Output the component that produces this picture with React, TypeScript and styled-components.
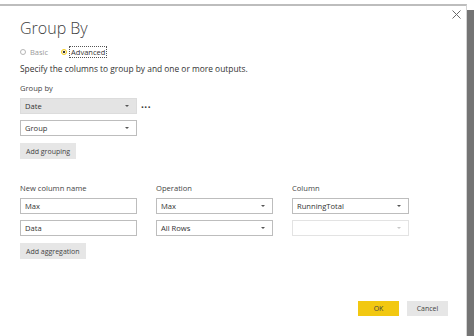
import styled, { createGlobalStyle } from "styled-components";

const GlobalStyle = createGlobalStyle`
  html, body {
    margin: 0;
    padding: 0;
    background: #ffffff;
  }
  body {
    font-family: "Open Sans", "Noto Sans", "Liberation Sans", sans-serif;
    color: #333333;
    overflow: hidden;
  }
`;

const Screen = styled.div`
  display: flex;
  align-items: flex-start;
  width: 474px;
  height: 336px;
  padding-top: 4px;
  box-sizing: border-box;
`;

const Dialog = styled.div`
  flex: none;
  width: 467px;
  height: 332px;
  box-sizing: border-box;
  border-top: 2px solid #bdbdbd;
  border-right: 1px solid #d4d4d4;
  background: #ffffff;
  padding: 0 0 0 20px;
  display: flex;
  flex-direction: column;
`;

const Shadow = styled.div`
  flex: none;
  width: 7px;
  height: 326px;
  margin-top: 6px;
  background: #747474;
`;

const Header = styled.div`
  display: flex;
  justify-content: space-between;
  align-items: flex-start;
  padding-right: 4px;
`;

const Close = styled.div`
  width: 11px;
  height: 11px;
  margin-top: 3px;
  display: flex;
  align-items: center;
  justify-content: center;
`;

const Title = styled.h1`
  margin: 12px 0 0;
  font-size: 16px;
  font-weight: 300;
  color: #404040;
  line-height: 20px;
`;

const RadioRow = styled.div`
  display: flex;
  align-items: center;
  gap: 12px;
  margin-top: 8px;
  font-size: 7.5px;
  height: 12px;
`;

const RadioOption = styled.label<{ $checked?: boolean }>`
  display: flex;
  align-items: center;
  gap: 3px;
  color: ${(p) => (p.$checked ? "#333" : "#9a9a9a")};

  span {
    padding: 0 1px;
    outline: ${(p) => (p.$checked ? "1px dotted #555" : "none")};
    line-height: 10px;
  }
`;

const RadioDot = styled.i<{ $checked?: boolean }>`
  width: 6px;
  height: 6px;
  border-radius: 50%;
  box-sizing: border-box;
  border: 1px solid ${(p) => (p.$checked ? "#f2c811" : "#b5b5b5")};
  background: ${(p) => (p.$checked ? "radial-gradient(circle, #333 0 1.3px, #fff 1.6px)" : "#fff")};
`;

const Description = styled.p`
  margin: 4px 0 0;
  font-size: 8.4px;
  line-height: 13px;
  color: #333;
`;

const Label = styled.div<{ $top?: number }>`
  margin-top: ${(p) => p.$top ?? 0}px;
  font-size: 7.6px;
  line-height: 12px;
  color: #444;
`;

const Row = styled.div<{ $top?: number }>`
  display: flex;
  align-items: center;
  margin-top: ${(p) => p.$top ?? 0}px;
`;

const Columns = styled.div<{ $top?: number }>`
  display: grid;
  grid-template-columns: 117px 117px 117px;
  column-gap: 19px;
  row-gap: 6px;
  margin-top: ${(p) => p.$top ?? 0}px;
`;

const Field = styled.div<{ $filled?: boolean; $disabled?: boolean }>`
  width: 117px;
  height: 16px;
  box-sizing: border-box;
  border: 1px solid ${(p) => (p.$filled ? "#dcdcdc" : p.$disabled ? "#e3e3e3" : "#bdbdbd")};
  background: ${(p) => (p.$filled ? "#e4e4e4" : "#ffffff")};
  display: flex;
  align-items: center;
  justify-content: space-between;
  padding: 0 5px 0 4px;
  font-size: 7.6px;
  color: #333;
`;

const Caret = styled.span<{ $disabled?: boolean }>`
  width: 0;
  height: 0;
  border-left: 2px solid transparent;
  border-right: 2px solid transparent;
  border-top: 2px solid ${(p) => (p.$disabled ? "#c8c8c8" : "#555")};
  margin-right: 2px;
`;

const More = styled.span`
  margin-left: 4px;
  font-size: 10px;
  letter-spacing: 0.5px;
  line-height: 8px;
  color: #333;
  font-weight: 700;
  padding-bottom: 4px;
`;

const GreyButton = styled.button<{ $top?: number }>`
  align-self: flex-start;
  margin-top: ${(p) => p.$top ?? 0}px;
  height: 16px;
  padding: 0 6px;
  border: none;
  background: #e6e6e6;
  font-family: inherit;
  font-size: 7px;
  color: #444;
`;

const Footer = styled.div`
  display: flex;
  justify-content: flex-end;
  gap: 8px;
  margin-top: auto;
  margin-bottom: 20px;
  padding-right: 18px;
`;

const DialogButton = styled.button<{ $primary?: boolean }>`
  width: 41px;
  height: 15px;
  border: none;
  padding: 0;
  background: ${(p) => (p.$primary ? "#f2c811" : "#e6e6e6")};
  font-family: inherit;
  font-size: 7px;
  color: #444;
`;

function Select({ value, filled, disabled }: { value?: string; filled?: boolean; disabled?: boolean }) {
  return (
    <Field $filled={filled} $disabled={disabled}>
      <span>{value}</span>
      <Caret $disabled={disabled} />
    </Field>
  );
}

export default function App() {
  return (
    <>
      <GlobalStyle />
      <Screen>
        <Dialog>
          <Header>
            <Title>Group By</Title>
            <Close aria-label="Close">
              <svg width="9" height="9" viewBox="0 0 9 9">
                <path d="M0.5 0.5 L8.5 8.5 M8.5 0.5 L0.5 8.5" stroke="#6a6a6a" strokeWidth="1" />
              </svg>
            </Close>
          </Header>
          <RadioRow>
            <RadioOption>
              <RadioDot />
              <span>Basic</span>
            </RadioOption>
            <RadioOption $checked>
              <RadioDot $checked />
              <span>Advanced</span>
            </RadioOption>
          </RadioRow>
          <Description>Specify the columns to group by and one or more outputs.</Description>
          <Label $top={7}>Group by</Label>
          <Row $top={4}>
            <Select value="Date" filled />
            <More>...</More>
          </Row>
          <Row $top={6}>
            <Select value="Group" />
          </Row>
          <GreyButton $top={7}>Add grouping</GreyButton>
          <Columns $top={23}>
            <Label>New column name</Label>
            <Label>Operation</Label>
            <Label>Column</Label>
          </Columns>
          <Columns $top={4}>
            <Field>Max</Field>
            <Select value="Max" />
            <Select value="RunningTotal" />
            <Field>Data</Field>
            <Select value="All Rows" />
            <Select disabled />
          </Columns>
          <GreyButton $top={7}>Add aggregation</GreyButton>
          <Footer>
            <DialogButton $primary>OK</DialogButton>
            <DialogButton>Cancel</DialogButton>
          </Footer>
        </Dialog>
        <Shadow />
      </Screen>
    </>
  );
}
